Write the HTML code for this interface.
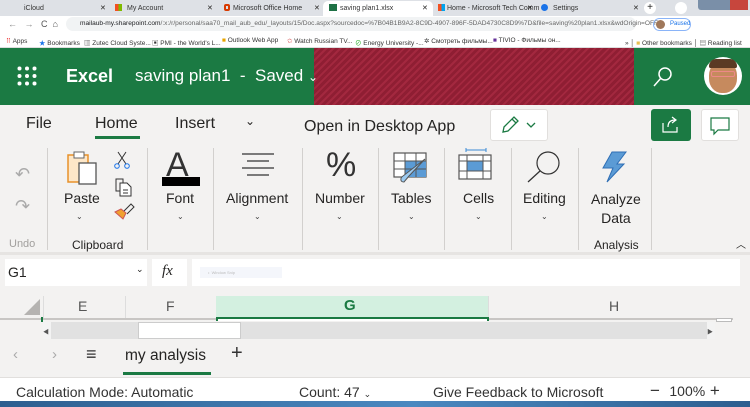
<!DOCTYPE html>
<html><head><meta charset="utf-8"><style>
*{margin:0;padding:0;box-sizing:border-box}
body{width:750px;height:407px;overflow:hidden;background:#f3f2f1;font-family:"Liberation Sans","Noto Sans CJK SC",sans-serif;position:relative;color:#252423}
.a{position:absolute;white-space:nowrap}
.tab{position:absolute;top:1px;height:15px;font-size:7px;color:#333;padding:4px 0 0 20px}
.bm{position:absolute;top:37px;font-size:6.5px;color:#333}
.lbl{position:absolute;font-size:14px;color:#252423;text-align:center}
.chev{position:absolute;font-size:8px;color:#444}
.sep{position:absolute;top:148px;width:1px;height:102px;background:#d2d0ce}
</style></head><body>
<div class="a" style="left:0;top:0;width:750px;height:16px;background:#dee1e6"></div>
<div class="a" style="left:323px;top:1px;width:110px;height:15px;background:#fff;border-radius:5px 5px 0 0"></div>
<div class="tab" style="left:4px">iCloud</div><div class="a" style="left:100px;top:4px;font-size:7px">✕</div>
<div class="a" style="left:115px;top:4px;width:7px;height:7px;background:linear-gradient(90deg,#f25022 50%,#7fba00 50%)"></div>
<div class="tab" style="left:107px">My Account</div><div class="a" style="left:207px;top:4px;font-size:7px">✕</div>
<div class="a" style="left:224px;top:4px;width:6px;height:7px;border:2px solid #d83b01;border-radius:2px"></div>
<div class="tab" style="left:213px">Microsoft Office Home</div><div class="a" style="left:314px;top:4px;font-size:7px">✕</div>
<div class="a" style="left:329px;top:4px;width:8px;height:7px;background:#1e7145"></div>
<div class="tab" style="left:320px">saving plan1.xlsx</div><div class="a" style="left:422px;top:4px;font-size:7px">✕</div>
<div class="a" style="left:438px;top:4px;width:7px;height:7px;background:linear-gradient(90deg,#f25022 50%,#00a4ef 50%)"></div>
<div class="tab" style="left:427px">Home - Microsoft Tech Comm</div><div class="a" style="left:527px;top:4px;font-size:7px">✕</div>
<div class="a" style="left:541px;top:4px;width:7px;height:7px;background:#1a73e8;border-radius:50%"></div>
<div class="tab" style="left:533px">Settings</div><div class="a" style="left:633px;top:4px;font-size:7px">✕</div>
<div class="a" style="left:644px;top:2px;width:12px;height:12px;border-radius:50%;background:#fff;font-size:10px;text-align:center;line-height:12px">+</div>
<div class="a" style="left:675px;top:2px;width:12px;height:12px;border-radius:50%;background:#fff"></div>
<div class="a" style="left:698px;top:0;width:50px;height:10px;background:#7a8fa8;border-radius:0 0 3px 3px"></div>
<div class="a" style="left:730px;top:0;width:18px;height:10px;background:#c7463d"></div>
<div class="a" style="left:0;top:16px;width:750px;height:17px;background:#fff"></div>
<div class="a" style="left:8px;top:19px;font-size:9px;color:#888">←&nbsp;&nbsp;&nbsp;→&nbsp;&nbsp;&nbsp;<span style="color:#555">C&nbsp;&nbsp;⌂</span></div>
<div class="a" style="left:66px;top:17px;width:570px;height:14px;background:#f1f3f4;border-radius:7px"></div>
<div class="a" style="left:80px;top:20px;font-size:6.6px;color:#202124">mailaub-my.sharepoint.com<span style="color:#666">/:x:/r/personal/saa70_mail_aub_edu/_layouts/15/Doc.aspx?sourcedoc=%7B04B1B9A2-8C9D-4907-896F-5DAD4730C8D9%7D&amp;file=saving%20plan1.xlsx&amp;wdOrigin=OFFI...</span></div>
<div class="a" style="left:653px;top:18px;width:38px;height:13px;border:1px solid #8ab4f8;border-radius:7px;font-size:6px;padding:2px 0 0 16px;color:#1a73e8">Paused</div>
<div class="a" style="left:656px;top:20px;width:9px;height:9px;border-radius:50%;background:#a0785a"></div>
<div class="a" style="left:0;top:33px;width:750px;height:15px;background:#fff;border-bottom:1px solid #ddd"></div>
<div class="bm" style="left:6px"><span style="color:#e44">⠿</span> Apps</div>
<div class="bm" style="left:39px"><span style="color:#1a73e8">★</span> Bookmarks</div>
<div class="bm" style="left:84px">▥ Zutec Cloud Syste...</div>
<div class="bm" style="left:152px">▣ PMI - the World's L...</div>
<div class="bm" style="left:222px"><span style="color:#e8a400">■</span> Outlook Web App</div>
<div class="bm" style="left:287px"><span style="color:#c22">✩</span> Watch Russian TV...</div>
<div class="bm" style="left:355px"><span style="color:#2a2">⊘</span> Energy University -...</div>
<div class="bm" style="left:424px">✲ Смотреть фильмы...</div>
<div class="bm" style="left:493px"><span style="color:#639">■</span> TIVIO - Фильмы он...</div>
<div class="bm" style="left:625px">» │ <span style="color:#e8c050">■</span> Other bookmarks │ ▤ Reading list</div>
<div class="a" style="left:0;top:48px;width:750px;height:57px;background:#1b7a43"></div>
<div class="a" style="left:314px;top:48px;width:320px;height:57px;background:repeating-linear-gradient(135deg,#8f1e33 0 3px,#a3283f 3px 5px)"></div>
<svg class="a" style="left:17px;top:66px" width="21" height="21"><g fill="#fff"><circle cx="2.5" cy="2.5" r="2"/><circle cx="10" cy="2.5" r="2"/><circle cx="17.5" cy="2.5" r="2"/><circle cx="2.5" cy="10" r="2"/><circle cx="10" cy="10" r="2"/><circle cx="17.5" cy="10" r="2"/><circle cx="2.5" cy="17.5" r="2"/><circle cx="10" cy="17.5" r="2"/><circle cx="17.5" cy="17.5" r="2"/></g></svg>
<div class="a" style="left:66px;top:66px;font-size:18px;font-weight:bold;color:#fff">Excel</div>
<div class="a" style="left:135px;top:66px;font-size:17px;color:#fff">saving plan1&nbsp; -&nbsp; Saved <span style="font-size:12px">⌄</span></div>
<svg class="a" style="left:650px;top:65px" width="24" height="24"><circle cx="15" cy="9" r="6" fill="none" stroke="#fff" stroke-width="1.5"/><line x1="11" y1="13" x2="4" y2="21" stroke="#fff" stroke-width="1.5"/></svg>
<div class="a" style="left:704px;top:57px;width:38px;height:38px;border-radius:50%;background:#fff"></div>
<div class="a" style="left:709px;top:61px;width:28px;height:32px;border-radius:45%;background:#c68a5e"></div>
<div class="a" style="left:709px;top:59px;width:28px;height:9px;border-radius:8px 8px 2px 2px;background:#5b3a24"></div>
<div class="a" style="left:711px;top:71px;width:24px;height:6px;border:1.5px solid #e88;border-radius:2px"></div>
<div class="a" style="left:26px;top:115px;font-size:16px">File</div>
<div class="a" style="left:95px;top:115px;font-size:16px">Home</div>
<div class="a" style="left:95px;top:136px;width:45px;height:3px;background:#1b7a43"></div>
<div class="a" style="left:175px;top:115px;font-size:16px">Insert</div>
<div class="a" style="left:245px;top:114px;font-size:12px">⌄</div>
<div class="a" style="left:304px;top:118px;font-size:16px">Open in Desktop App</div>
<div class="a" style="left:490px;top:109px;width:58px;height:32px;background:#fff;border:1px solid #e1dfdd;border-radius:3px"></div>
<svg class="a" style="left:500px;top:115px" width="40" height="20"><path d="M3 17 L4 12 L14 2 L18 6 L8 16 Z M12 4 L16 8" fill="none" stroke="#1b7a43" stroke-width="1.3"/><path d="M27 8 L31 12 L35 8" fill="none" stroke="#1b7a43" stroke-width="1.3"/></svg>
<div class="a" style="left:651px;top:109px;width:40px;height:32px;background:#1b7a43;border-radius:3px"></div>
<svg class="a" style="left:660px;top:115px" width="22" height="20"><path d="M3 8 V17 H17 V12 M8 12 C8 7 11 5 15 5 M12 2 L16 5 L12 8" fill="none" stroke="#fff" stroke-width="1.2"/></svg>
<div class="a" style="left:701px;top:109px;width:38px;height:32px;background:#fff;border:1px solid #e1dfdd;border-radius:3px"></div>
<svg class="a" style="left:708px;top:116px" width="24" height="20"><path d="M3 2 H21 V14 H10 L6 18 V14 H3 Z" fill="none" stroke="#1b7a43" stroke-width="1.2"/></svg>
<div class="a" style="left:0;top:145px;width:750px;height:108px;background:#f3f2f1"></div>
<div class="a" style="left:15px;top:164px;font-size:18px;color:#aaa">↶</div>
<div class="a" style="left:15px;top:196px;font-size:18px;color:#aaa">↷</div>
<div class="a" style="left:9px;top:238px;font-size:11px;color:#a19f9d">Undo</div>
<div class="sep" style="left:47px"></div>
<svg class="a" style="left:66px;top:150px" width="36" height="36"><rect x="2" y="5" width="20" height="27" fill="#fde7c8" stroke="#e8912a" stroke-width="1.5"/><rect x="8" y="2" width="10" height="6" fill="#fff" stroke="#666" stroke-width="1"/><rect x="13" y="13" width="17" height="21" fill="#fff" stroke="#555" stroke-width="1.3"/></svg>
<div class="lbl" style="left:64px;top:190px">Paste</div>
<div class="chev" style="left:76px;top:212px">⌄</div>
<svg class="a" style="left:112px;top:150px" width="20" height="20"><path d="M6 2 L14 14 M14 2 L6 14" stroke="#333" stroke-width="1"/><circle cx="5" cy="16" r="2.3" fill="none" stroke="#1a73e8"/><circle cx="15" cy="16" r="2.3" fill="none" stroke="#1a73e8"/></svg>
<svg class="a" style="left:112px;top:176px" width="22" height="22"><path d="M4 3 H11 V15 H4 Z" fill="none" stroke="#333"/><path d="M8 7 H15 L19 11 V20 H8 Z" fill="#fff" stroke="#333"/><path d="M11 14 H16 M11 17 H16" stroke="#333"/></svg>
<svg class="a" style="left:112px;top:202px" width="24" height="20"><path d="M3 10 L11 17 L14 11 L9 7 Z" fill="#f0a030" stroke="#c55" stroke-width="1"/><path d="M12 9 L19 2 L22 5 L15 12" fill="none" stroke="#333"/></svg>
<div class="a" style="left:72px;top:238px;font-size:12px">Clipboard</div>
<div class="sep" style="left:147px"></div>
<div class="a" style="left:166px;top:146px;font-size:34px;color:#333">A</div>
<div class="a" style="left:162px;top:177px;width:38px;height:9px;background:#000"></div>
<div class="lbl" style="left:166px;top:190px">Font</div>
<div class="chev" style="left:177px;top:212px">⌄</div>
<div class="sep" style="left:213px"></div>
<svg class="a" style="left:240px;top:152px" width="36" height="26"><path d="M2 2 H34 M7 9 H29 M2 16 H34 M7 23 H29" stroke="#333" stroke-width="1.3"/></svg>
<div class="lbl" style="left:226px;top:190px">Alignment</div>
<div class="chev" style="left:254px;top:212px">⌄</div>
<div class="sep" style="left:302px"></div>
<div class="a" style="left:326px;top:146px;font-size:34px;color:#333">%</div>
<div class="lbl" style="left:315px;top:190px">Number</div>
<div class="chev" style="left:336px;top:212px">⌄</div>
<div class="sep" style="left:378px"></div>
<svg class="a" style="left:393px;top:152px" width="36" height="32"><rect x="1" y="1" width="32" height="24" fill="#fff" stroke="#555" stroke-width="1.2"/><rect x="12" y="9" width="21" height="16" fill="#5b9bd5"/><path d="M1 9 H33 M1 17 H33 M12 1 V25 M23 1 V25" stroke="#555"/><path d="M32 7 L16 24 L11 30 C7 30 7 26 10 24 Z" fill="#9ccaf0" stroke="#555"/></svg>
<div class="lbl" style="left:391px;top:190px">Tables</div>
<div class="chev" style="left:408px;top:212px">⌄</div>
<div class="sep" style="left:444px"></div>
<svg class="a" style="left:458px;top:148px" width="36" height="32"><path d="M8 2 H28 M8 0 V4 M28 0 V4" stroke="#3b8bd5"/><rect x="1" y="7" width="32" height="24" fill="#fff" stroke="#555" stroke-width="1.2"/><rect x="9" y="13" width="16" height="10" fill="#5b9bd5"/><path d="M1 13 H33 M1 23 H33 M9 7 V31 M25 7 V31" stroke="#555"/></svg>
<div class="lbl" style="left:463px;top:190px">Cells</div>
<div class="chev" style="left:475px;top:212px">⌄</div>
<div class="sep" style="left:511px"></div>
<svg class="a" style="left:525px;top:150px" width="40" height="34"><circle cx="23" cy="13" r="11" fill="none" stroke="#333" stroke-width="1.2"/><line x1="15" y1="21" x2="3" y2="32" stroke="#333" stroke-width="1.3"/></svg>
<div class="lbl" style="left:523px;top:190px">Editing</div>
<div class="chev" style="left:541px;top:212px">⌄</div>
<div class="sep" style="left:578px"></div>
<svg class="a" style="left:598px;top:150px" width="30" height="34"><path d="M14 2 H28 L19 14 H26 L9 32 L15 18 H5 Z" fill="#5b9bd5" stroke="#2f6fb5" stroke-width="1"/></svg>
<div class="lbl" style="left:591px;top:190px;line-height:19px">Analyze<br>Data</div>
<div class="a" style="left:594px;top:238px;font-size:12px">Analysis</div>
<div class="sep" style="left:651px"></div>
<div class="a" style="left:736px;top:236px;font-size:10px">︿</div>
<div class="a" style="left:0;top:252px;width:750px;height:3px;background:#e6e4e2"></div>
<div class="a" style="left:5px;top:259px;width:142px;height:27px;background:#fff"></div>
<div class="a" style="left:8px;top:264px;font-size:14px">G1</div>
<div class="a" style="left:136px;top:264px;font-size:9px">⌄</div>
<div class="a" style="left:152px;top:259px;width:35px;height:27px;background:#fff"></div>
<div class="a" style="left:162px;top:263px;font-size:15px;font-style:italic;font-family:'Liberation Serif',serif">fx</div>
<div class="a" style="left:192px;top:259px;width:548px;height:27px;background:#fff"></div>
<div class="a" style="left:200px;top:267px;width:82px;height:11px;background:#f4f6fb;font-size:4px;color:#bbb;padding:3px 0 0 8px">•&nbsp;&nbsp;Window Snip</div>
<div class="a" style="left:0;top:296px;width:750px;height:22px;background:#f3f2f1"></div>
<svg class="a" style="left:22px;top:297px" width="20" height="20"><path d="M18 2 V18 H2 Z" fill="#b5b3b1"/></svg>
<div class="a" style="left:43px;top:296px;width:1px;height:22px;background:#ddd"></div>
<div class="a" style="left:78px;top:298px;font-size:14px;color:#555">E</div>
<div class="a" style="left:125px;top:296px;width:1px;height:22px;background:#ddd"></div>
<div class="a" style="left:166px;top:298px;font-size:14px;color:#555">F</div>
<div class="a" style="left:216px;top:296px;width:272px;height:22px;background:#d3f0e0"></div>
<div class="a" style="left:344px;top:297px;font-size:15px;font-weight:bold;color:#1b7a43">G</div>
<div class="a" style="left:488px;top:296px;width:1px;height:22px;background:#ddd"></div>
<div class="a" style="left:609px;top:298px;font-size:14px;color:#555">H</div>
<div class="a" style="left:0;top:318px;width:733px;height:2px;background:#c8c6c4"></div>
<div class="a" style="left:216px;top:317px;width:273px;height:4px;border:2px solid #1b7a43;border-bottom:none;background:#fff"></div>
<div class="a" style="left:41px;top:317px;width:2px;height:5px;background:#1b7a43"></div>
<div class="a" style="left:43px;top:322px;width:672px;height:17px;background:#e1e1e1"></div>
<div class="a" style="left:43px;top:322px;width:8px;height:17px;background:#f3f3f3;font-size:6px;color:#555;padding-top:5px">◀</div>
<div class="a" style="left:138px;top:322px;width:103px;height:17px;background:#fff;border:1px solid #ccc"></div>
<div class="a" style="left:707px;top:322px;width:8px;height:17px;background:#f3f3f3;font-size:6px;color:#555;padding-top:5px">▶</div>
<div class="a" style="left:716px;top:318px;width:16px;height:4px;border:1px solid #bbb;background:#fff"></div>
<div class="a" style="left:13px;top:346px;font-size:15px;color:#aaa">‹</div>
<div class="a" style="left:52px;top:346px;font-size:15px;color:#aaa">›</div>
<div class="a" style="left:86px;top:344px;font-size:18px;color:#333">≡</div>
<div class="a" style="left:125px;top:347px;font-size:15.5px;color:#252423">my analysis</div>
<div class="a" style="left:123px;top:372px;width:88px;height:3px;background:#1b7a43"></div>
<div class="a" style="left:231px;top:342px;font-size:20px;color:#333">+</div>
<div class="a" style="left:0;top:377px;width:750px;height:24px;background:#fff;border-top:1px solid #e1dfdd"></div>
<div class="a" style="left:16px;top:384px;font-size:14px;color:#333">Calculation Mode: Automatic</div>
<div class="a" style="left:299px;top:384px;font-size:14px;color:#333">Count: 47 <span style="font-size:9px">⌄</span></div>
<div class="a" style="left:433px;top:384px;font-size:14px;color:#333">Give Feedback to Microsoft</div>
<div class="a" style="left:650px;top:381px;font-size:17px;color:#333">−&nbsp; <span style="font-size:14px">100%</span> +</div>
<div class="a" style="left:0;top:401px;width:750px;height:6px;background:linear-gradient(90deg,#2d5e8f,#4a88c0 55%,#2d5e8f)"></div>
</body></html>
